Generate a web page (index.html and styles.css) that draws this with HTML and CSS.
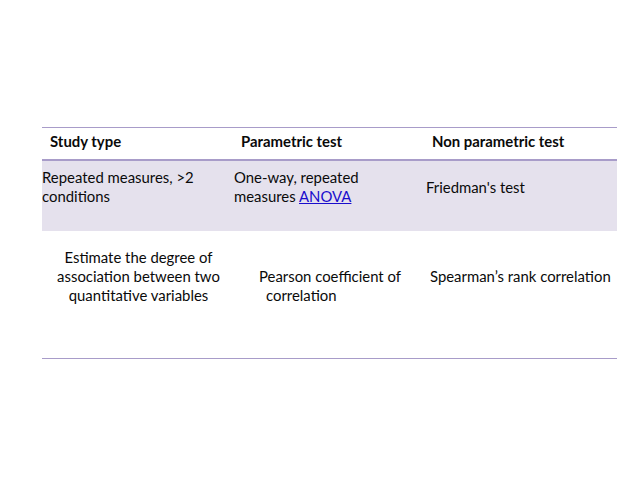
FILE: index.html
```html
<!DOCTYPE html>
<html>
<head>
<meta charset="utf-8">
<link rel="stylesheet" href="styles.css">
</head>
<body>
<div class="tbl">
  <div class="row head">
    <div class="cell h1">Study type</div>
    <div class="cell h2">Parametric test</div>
    <div class="cell h3">Non parametric test</div>
  </div>
  <div class="row shaded">
    <div class="cell r2c1">Repeated measures, &gt;2 conditions</div>
    <div class="cell r2c2"><span>One-way, repeated</span><span class="l2">measures <a href="#">ANOVA</a></span></div>
    <div class="cell r2c3">Friedman's test</div>
  </div>
  <div class="row last">
    <div class="cell r3c1">Estimate the degree of association between two quantitative variables</div>
    <div class="cell r3c2">Pearson coefficient of correlation</div>
    <div class="cell r3c3">Spearman’s rank correlation</div>
  </div>
</div>
</body>
</html>
```
FILE: styles.css
```css
html, body {
  margin: 0;
  background: #ffffff;
}
body {
  font-family: Lato, "Open Sans", sans-serif;
  font-size: 14.9px;
  line-height: 19px;
  color: #0a0a0a;
}
.tbl {
  margin: 127px 0 0 42px;
  width: 575px;
}
.row {
  display: grid;
  grid-template-columns: 191px 192px 192px;
  box-sizing: border-box;
}
.head {
  height: 34px;
  border-top: 1px solid #a89cc9;
  border-bottom: 2px solid #a89cc9;
  font-weight: bold;
}
.head .cell {
  padding-top: 4px;
}
.h1 { padding-left: 8px; }
.h2 { padding-left: 8px; }
.h3 { padding-left: 7px; }
.shaded {
  height: 70px;
  background: #e5e1ed;
}
.r2c1 { padding-top: 7px; padding-right: 4px; }
.r2c2 {
  padding-top: 7px;
  padding-left: 1px;
  display: flex;
  flex-direction: column;
  align-items: flex-start;
}
.r2c3 { padding-top: 17px; padding-left: 1px; }
.r2c2 a {
  color: #1a0dcc;
  text-decoration: underline;
}
.last {
  height: 128px;
  border-bottom: 1px solid #a89cc9;
}
.r3c1 {
  padding: 17px 6px 0 8px;
  text-align: center;
}
.r3c2 {
  padding: 36px 10px 0 33px;
  text-indent: -7px;
}
.r3c3 {
  padding-top: 36px;
  padding-left: 5px;
  white-space: nowrap;
}
```
